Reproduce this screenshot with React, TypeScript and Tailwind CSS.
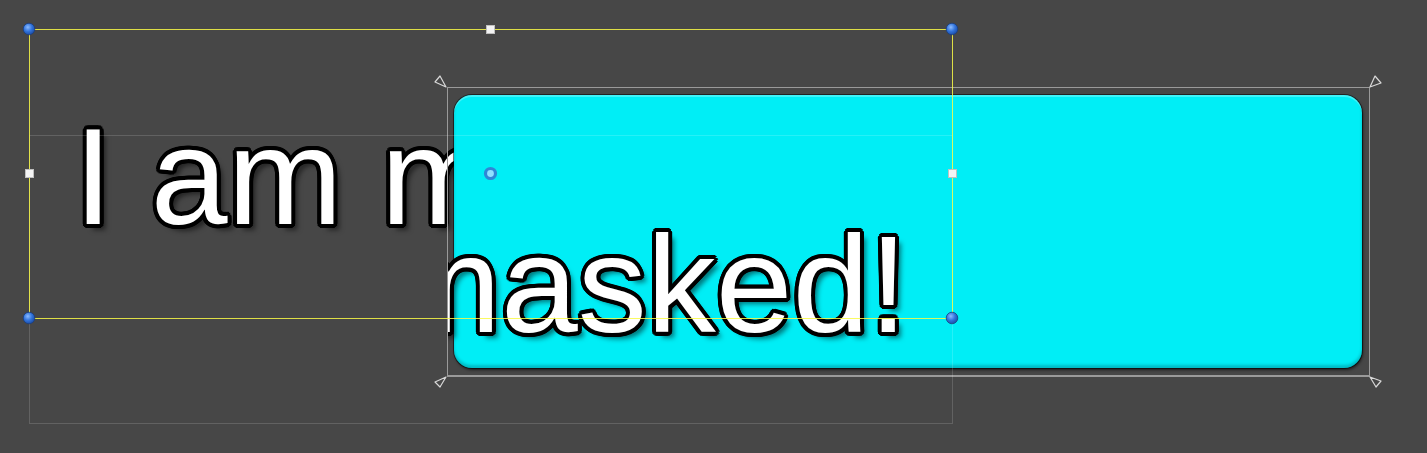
// Scene view: a UI text element, an image mask over it, and the editor gizmos
const textFx =
  "[text-shadow:4px_0_0_#000,3.7px_1.5px_0_#000,2.8px_2.8px_0_#000,1.5px_3.7px_0_#000,0_4px_0_#000,-1.5px_3.7px_0_#000,-2.8px_2.8px_0_#000,-3.7px_1.5px_0_#000,-4px_0_0_#000,-3.7px_-1.5px_0_#000,-2.8px_-2.8px_0_#000,-1.5px_-3.7px_0_#000,0_-4px_0_#000,1.5px_-3.7px_0_#000,2.8px_-2.8px_0_#000,3.7px_-1.5px_0_#000,6px_6px_5px_rgba(0,0,0,0.5)]";

function Dot({ x, y }: { x: number; y: number }) {
  return (
    <svg className="absolute" style={{ left: x - 7, top: y - 7 }} width="14" height="14" viewBox="0 0 14 14">
      <defs>
        <radialGradient id={`g${x}${y}`} cx="40%" cy="35%" r="65%">
          <stop offset="0%" stopColor="#8cbcff" />
          <stop offset="55%" stopColor="#3274dc" />
          <stop offset="100%" stopColor="#1d4ea8" />
        </radialGradient>
      </defs>
      <circle cx="7" cy="7" r="5.8" fill={`url(#g${x}${y})`} stroke="#1b3f80" strokeWidth="0.8" />
    </svg>
  );
}

function Handle({ x, y }: { x: number; y: number }) {
  return (
    <div
      className="absolute w-[9px] h-[9px] bg-[#f4f4f4] border border-[#c0c0c0]"
      style={{ left: x - 4, top: y - 4 }}
    />
  );
}

function Corner({ points }: { points: string }) {
  return (
    <svg className="absolute left-0 top-0 pointer-events-none" width="1427" height="453">
      <polygon points={points} fill="none" stroke="#d8d8d8" strokeWidth="1.2" strokeLinejoin="round" />
    </svg>
  );
}

export default function App() {
  return (
    <div className="relative w-[1427px] h-[453px] bg-[#474747] overflow-hidden font-['Liberation_Sans',Arial,sans-serif]">
      {/* first line of the label, sits under the masked image */}
      <div className={`absolute left-[74px] top-[107px] whitespace-nowrap text-[138px] leading-none text-white ${textFx}`}>
        I am masked!
      </div>

      {/* mask image */}
      <div className="absolute left-[454px] top-[95px] w-[908px] h-[273px] rounded-[18px] bg-[#00eef6] shadow-[0_0_0_1px_rgba(0,0,0,0.5),1px_2px_3px_rgba(0,0,0,0.6),inset_0_2px_0_rgba(255,255,255,0.25),inset_0_-3px_3px_rgba(0,40,50,0.25)]" />

      {/* child text, clipped to the mask rect */}
      <div className="absolute left-[447px] top-[87px] w-[922px] h-[289px] overflow-hidden">
        <div className={`absolute left-[-61px] top-[128px] whitespace-nowrap text-[138px] leading-none text-white ${textFx}`}>
          masked!
        </div>
      </div>

      {/* mask rect outline and its corner arrows */}
      <div className="absolute left-[447px] top-[87px] w-[923px] h-[290px] border border-b-2 border-[#9a9a9a]" />
      <Corner points="440,76 435,82 446,87" />
      <Corner points="1375,76 1381,83 1370,87" />
      <Corner points="1370,377 1381,381 1376,387" />
      <Corner points="446,377 435,382 440,387" />

      {/* text rect */}
      <div className="absolute left-[29px] top-[135px] w-[924px] h-[289px] border border-white/15" />

      {/* selection rect */}
      <div className="absolute left-[29px] top-[29px] w-[924px] h-[290px] border border-[rgba(250,250,70,0.85)]" />
      <Handle x={490} y={29} />
      <Handle x={29} y={173} />
      <Handle x={952} y={173} />
      <Dot x={29} y={29} />
      <Dot x={952} y={29} />
      <Dot x={29} y={318} />
      <Dot x={952} y={318} />

      {/* pivot */}
      <svg className="absolute left-[483px] top-[166px]" width="15" height="15" viewBox="0 0 15 15">
        <circle cx="7.5" cy="7.5" r="5" fill="#8fe0ff" stroke="#2f86d6" strokeWidth="3.2" />
      </svg>
    </div>
  );
}
